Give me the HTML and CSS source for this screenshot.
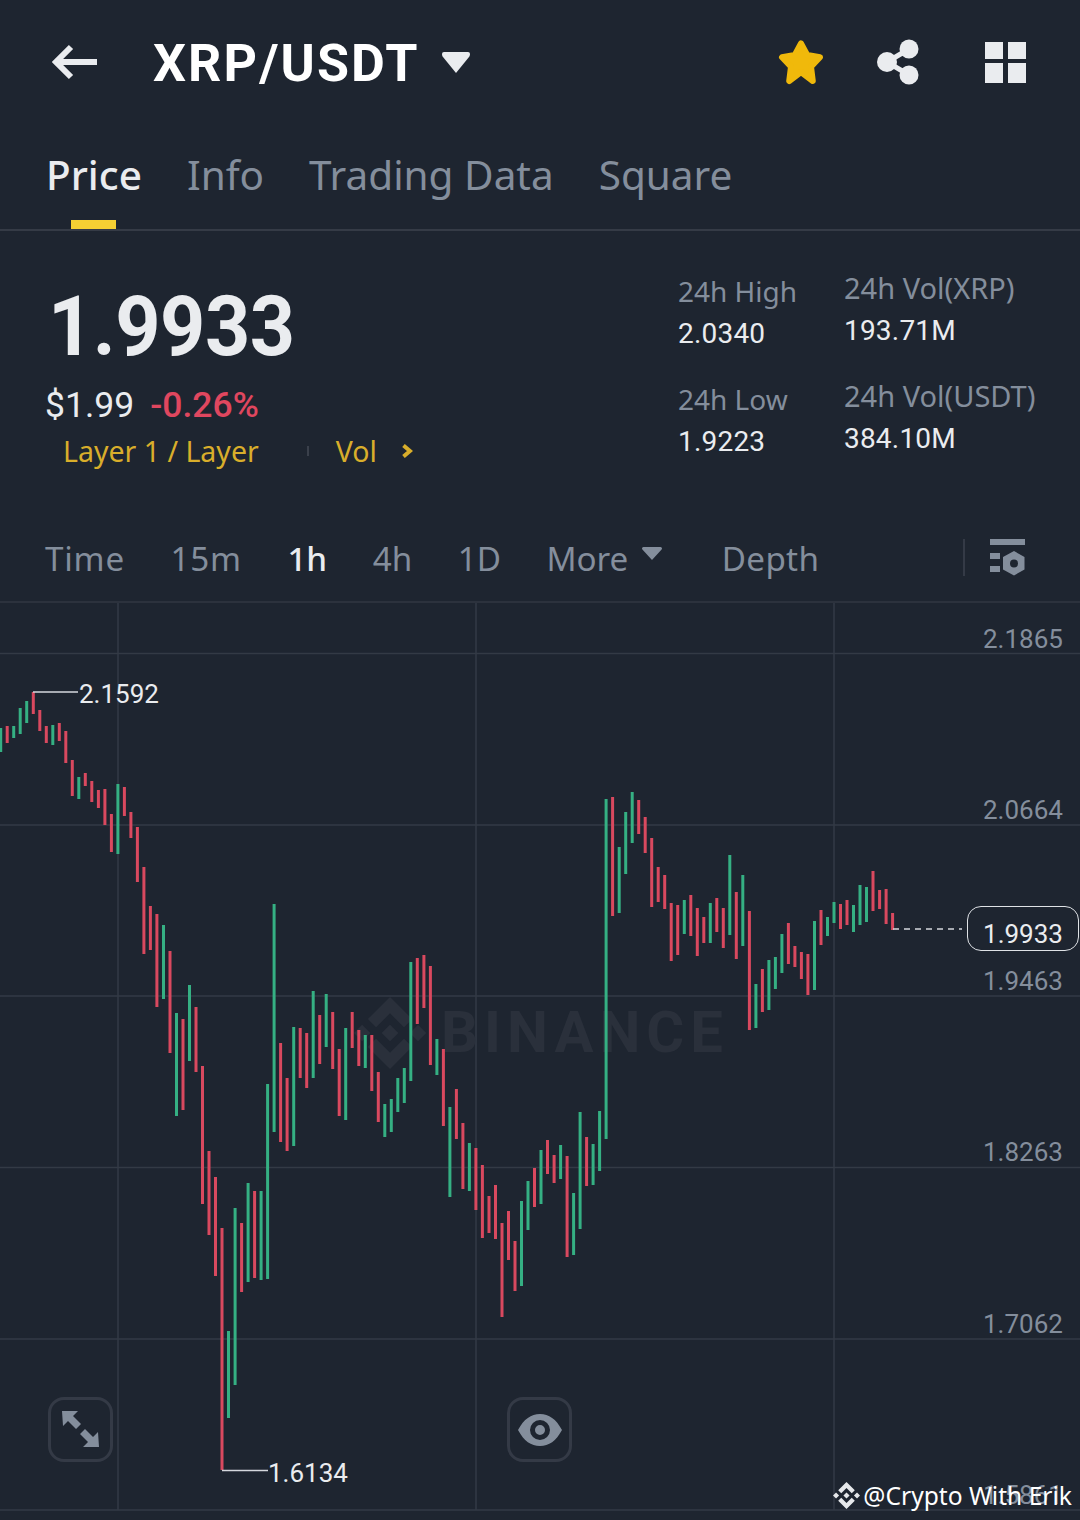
FILE: index.html
```html
<!DOCTYPE html>
<html lang="en">
<head>
<meta charset="utf-8">
<title>XRP/USDT</title>
<link rel="stylesheet" href="styles.css">
</head>
<body>
<div class="page">
  <header class="header">
    <svg class="back" width="46" height="36" viewBox="0 0 46 36"><path d="M45 18H5M19 3L4 18l15 15" /></svg>
    <h1 class="pair">XRP/USDT</h1>
    <svg class="pair-caret" width="28" height="21" viewBox="0 0 28 21"><path d="M2 0h24a2 2 0 0 1 2 2c0 1-.4 2.500-1 3L14 21 1 5C.4 4.500 0 3 0 2a2 2 0 0 1 2-2z"/></svg>
    <div class="header-icons">
      <svg width="46" height="46" viewBox="0 0 46 46"><path class="star" d="M23 4.500L29.200 16 42 18.300 33 27.700 34.800 42 23 33 11.200 42 13 27.700 4 18.300 16.800 16z"/></svg>
      <svg class="share" width="44" height="46" viewBox="0 0 44 46"><path d="M33 10L11 23l22 13"/><circle cx="33" cy="10" r="9.500"/><circle cx="11" cy="23" r="10"/><circle cx="33" cy="36" r="9.500"/></svg>
      <svg class="layout" width="41" height="41" viewBox="0 0 41 41"><rect x="0" y="0" width="18" height="17"/><rect x="23" y="0" width="18" height="17"/><rect x="0" y="21" width="18" height="20"/><rect x="23" y="21" width="18" height="20"/></svg>
    </div>
  </header>

  <nav class="tabs">
    <a class="tab tab-active">Price<span class="tab-mark"></span></a>
    <a class="tab">Info</a>
    <a class="tab">Trading Data</a>
    <a class="tab">Square</a>
  </nav>

  <section class="summary">
    <div class="summary-left">
      <div class="last-price">1.9933</div>
      <div class="fiat-row"><span class="fiat">$1.99</span><span class="change">-0.26%</span></div>
      <div class="tags-row">
        <span>Layer 1 / Layer</span>
        <i class="tags-divider"></i>
        <span>Vol</span>
        <svg class="tags-chevron" width="12" height="14" viewBox="0 0 12 14"><path d="M2.500 1.500L9 7l-6.500 5.500"/></svg>
      </div>
    </div>
    <div class="stats">
      <dl class="stat-col">
        <dt>24h High</dt><dd>2.0340</dd>
        <dt>24h Low</dt><dd>1.9223</dd>
      </dl>
      <dl class="stat-col stat-col-raised">
        <dt>24h Vol(XRP)</dt><dd>193.71M</dd>
        <dt>24h Vol(USDT)</dt><dd>384.10M</dd>
      </dl>
    </div>
  </section>

  <nav class="ranges">
    <span class="range-wide">Time</span>
    <span class="range-wide">15m</span>
    <span class="range-active">1h</span>
    <span>4h</span>
    <span>1D</span>
    <span class="range-more">More<svg width="20" height="13" viewBox="0 0 20 13"><path d="M1.500 0h17a1.500 1.500 0 0 1 1.100 2.500L10 13 .4 2.500A1.500 1.500 0 0 1 1.500 0z"/></svg></span>
    <span class="range-depth">Depth</span>
    <i class="ranges-divider"></i>
    <svg class="ranges-settings" width="36" height="37" viewBox="0 0 36 37"><path d="M0 0h35v6H0zM0 14h10v6H0zM0 27h10v6H0z"/><path fill-rule="evenodd" d="M24 12l10.500 6v12.500L24 36.500l-11-6V18zm0 8.500a4 4 0 1 0 0 8 4 4 0 0 0 0-8z"/></svg>
  </nav>

  <main class="chart">
    <svg class="chart-svg" width="1080" height="917" viewBox="0 603 1080 917">
      <path class="grid" d="M0 653.500H1080M0 825H1080M0 996H1080M0 1167.500H1080M0 1339H1080M0 1510H1080M118 603V1510M476 603V1510M834 603V1510"/>
      <g class="mark">
        <g transform="translate(354 997) scale(.5687)">
          <path d="M38.730 53.200l24.590-24.580 24.600 24.600 14.300-14.300L63.320 0l-38.900 38.900 14.310 14.300zM0 63.310L14.300 49l14.310 14.310-14.310 14.300zM38.730 73.410L63.320 98l24.600-24.600 14.310 14.290-38.900 38.910-38.910-38.880-.02-.02zM98.280 63.310l14.300-14.310 14.310 14.300-14.310 14.310zM77.830 63.300L63.320 48.780 52.590 59.510l-1.240 1.230-2.540 2.540 14.510 14.500 14.510-14.470z"/>
        </g>
        <text class="mark-word" x="441" y="1052">BINANCE</text>
      </g>
      <path class="candles-green" d="M.7 728V752M13.700 726V738M20.200 708V734M26.700 701V723M52.800 725V745M78.800 777V799M117.900 784V854M163.500 925V999M176.500 1013V1116M189.500 985V1061M228.500 1331V1418M235.100 1208V1385M248.100 1183V1282M261.100 1191V1280M267.600 1084V1279M274.100 904V1132M293.700 1027V1146M313.200 991V1078M326.200 994V1047M345.700 1028V1120M365.300 1035V1068M384.800 1104V1137M391.300 1099V1132M397.800 1078V1112M404.300 1068V1103M410.800 962V1081M436.900 1039V1075M449.900 1107V1197M469.400 1143V1191M521.500 1201V1286M528 1181V1230M541 1150V1204M560.600 1145V1179M573.600 1193V1255M580.100 1112V1229M593.100 1144V1185M599.600 1111V1171M606.100 799V1139M619.200 847V913M625.700 812V874M632.200 792V843M684.300 900V934M710.300 903V943M729.800 855V935M742.800 875V946M755.900 984V1028M768.900 960V1010M775.400 957V989M781.900 934V973M814.500 921V990M827.500 917V936M834 902V923M853.500 905V932M860 885V925M866.500 887V922"/>
      <path class="candles-red" d="M7.200 726V743M33.300 692V714M39.800 710V731M46.300 726V743M59.300 723V741M65.800 731V763M72.300 760V796M85.300 773V786M91.800 781V802M98.400 790V808M104.900 789V825M111.400 814V852M124.400 787V816M130.900 812V838M137.400 827V882M143.900 867V954M150.400 906V950M156.900 914V1007M170 951V1053M183 1019V1110M196 1007V1072M202.500 1066V1204M209 1151V1235M215.500 1177V1276M222 1228V1470M241.600 1223V1292M254.600 1191V1278M280.600 1043V1142M287.100 1078V1151M300.200 1028V1078M306.700 1033V1088M319.700 1015V1064M332.700 1012V1069M339.200 1049V1116M352.200 1012V1048M358.800 1030V1066M371.800 1035V1091M378.300 1072V1122M417.300 958V1024M423.900 955V1008M430.400 966V1065M443.400 1049V1126M456.400 1089V1139M462.900 1123V1189M475.900 1148V1210M482.400 1165V1238M489 1196V1233M495.500 1185V1239M502 1223V1317M508.500 1211V1260M515 1241V1291M534.500 1168V1207M547.500 1140V1174M554.100 1155V1183M567.100 1156V1257M586.600 1137V1186M612.600 797V916M638.700 800V834M645.200 817V853M651.700 838V907M658.200 867V902M664.700 875V909M671.200 903V961M677.700 905V955M690.800 895V936M697.300 908V956M703.800 917V943M716.800 898V932M723.300 908V948M736.300 892V959M749.400 911V1030M762.400 969V1012M788.400 923V964M794.900 946V967M801.400 952V979M807.900 954V995M821 910V945M840.500 904V929M847 900V925M873 871V911M879.600 890V909M886.100 889V924M892.600 913V930"/>
      <path class="leader" d="M33 692H78M222 1470.500H268"/>
      <path class="last-line" d="M893 929H962"/>
      <g class="axis">
        <text x="983" y="648">2.1865</text>
        <text x="983" y="819">2.0664</text>
        <text x="983" y="990">1.9463</text>
        <text x="983" y="1161">1.8263</text>
        <text x="983" y="1333">1.7062</text>
        <text x="983" y="1504">1.5861</text>
      </g>
      <text class="extreme" x="79" y="703">2.1592</text>
      <text class="extreme" x="268" y="1482">1.6134</text>
    </svg>

    <div class="price-tag">1.9933</div>

    <button class="chart-btn btn-expand">
      <svg width="38" height="38" viewBox="0 0 38 38"><path d="M0 0h16l-5 5 8 8-5 5-8-8-5 5zM37 36H21l5-5-8-8 5-5 8 8 5-5z"/></svg>
    </button>
    <button class="chart-btn btn-eye">
      <svg width="44" height="32" viewBox="0 0 44 32"><path fill-rule="evenodd" d="M22 0c9 0 16 5 22 16-6 11-13 16-22 16S6 27 0 16C6 5 13 0 22 0zm0 6a10 10 0 1 0 0 20 10 10 0 0 0 0-20zm0 5a5 5 0 1 1 0 10 5 5 0 0 1 0-10z"/></svg>
    </button>

    <div class="credit">
      <svg width="27" height="27" viewBox="0 0 126.610 126.610"><path d="M38.730 53.200l24.590-24.580 24.600 24.600 14.300-14.300L63.320 0l-38.900 38.900 14.310 14.300zM0 63.310L14.300 49l14.310 14.310-14.310 14.300zM38.730 73.410L63.320 98l24.600-24.600 14.310 14.290-38.900 38.910-38.910-38.880-.02-.02zM98.280 63.310l14.300-14.310 14.310 14.300-14.310 14.310zM77.830 63.300L63.320 48.780 52.590 59.510l-1.240 1.230-2.540 2.540 14.510 14.500 14.510-14.470z"/></svg>
      <span>@Crypto With Erik</span>
    </div>
  </main>
</div>
</body>
</html>
```
FILE: styles.css
```css
* { box-sizing: border-box; }
html, body { margin: 0; padding: 0; background: #1e2530; }
body { font-family: "Noto Sans", sans-serif; color: #eaecef; }
.page { width: 1080px; height: 1520px; overflow: hidden; display: flex; flex-direction: column; }

.header { height: 124px; display: flex; align-items: center; padding: 0 54px 0 52px; flex: none; }
.back { fill: none; stroke: #eaecef; stroke-width: 6; margin-right: 55px; }
.pair { margin: 0 22px 0 0; font: 700 52px/1 Roboto, sans-serif; color: #fff; letter-spacing: 2.100px; position: relative; top: 2px; }
.pair-caret { fill: #eaecef; }
.header-icons { margin-left: auto; display: flex; align-items: center; gap: 52px; }
.star { fill: #f0b90b; stroke: #f0b90b; stroke-width: 6; stroke-linejoin: round; }
.share { fill: #eaecef; }
.share path { fill: none; stroke: #eaecef; stroke-width: 5; }
.layout { fill: #eaecef; margin-left: 13px; }

.tabs { height: 107px; flex: none; display: flex; gap: 45px; padding: 0 0 0 46px; border-bottom: 2px solid #353b46; }
.tab { display: flex; flex-direction: column; align-items: center; color: #848e9c; font-size: 40.500px; line-height: 54px; padding-top: 24px; }
.tab-active { color: #eaecef; font-weight: 500; }
.tab-mark { width: 45px; height: 9px; background: #f5d033; margin-top: 18px; }

.summary { height: 291px; flex: none; display: flex; justify-content: space-between; padding: 0 46px 0 46px; }
.summary-left { padding-top: 54px; }
.last-price { font: 700 84px/1 Roboto, sans-serif; margin-left: 2px; letter-spacing: -.5px; color: #eaecef; transform: scaleX(.94); transform-origin: left center; }
.fiat-row { display: flex; gap: 16px; margin: 15px 0 0 -1px; font: 400 35.500px/42px Roboto, sans-serif; }
.change { color: #e0475f; font-weight: 500; }
.tags-row { display: flex; align-items: center; margin: 5px 0 0 17px; color: #d9ae2b; font: 400 28.500px/40px "Noto Sans", sans-serif; }
.tags-divider { width: 2px; height: 10px; background: #3a404b; margin: 0 27px 0 48px; }
.tags-chevron { fill: none; stroke: #d9ae2b; stroke-width: 4; margin-left: 24px; }

.stats { display: grid; grid-template-columns: 166px auto; padding-top: 40px; width: 356px; flex: none; }
.stat-col { margin: 0; }
.stat-col dt { color: #848e9c; font-size: 28px; line-height: 40px; white-space: nowrap; }
.stat-col-raised { margin-top: -3px; }
.stat-col-raised dt { font-size: 29px; }
.stat-col dd { margin: 3px 0 25px; font: 400 28px/40px Roboto, sans-serif; color: #eaecef; letter-spacing: .2px; white-space: nowrap; }

.ranges { height: 81px; flex: none; display: flex; align-items: center; gap: 45.500px; padding: 0 54px 6px 45px; border-bottom: 2px solid #2c323d; color: #848e9c; font-size: 33.200px; }
.range-wide { letter-spacing: .8px; }
.range-active { color: #eaecef; font-weight: 500; }
.range-more { display: flex; align-items: center; gap: 14px; }
.range-more svg { fill: #848e9c; margin-top: -10px; }
.range-depth { margin-left: 14px; letter-spacing: .3px; }
.ranges-divider { width: 2px; height: 37px; background: #343a46; margin-left: auto; margin-right: -20px; margin-top: -2px; }
.ranges-settings { fill: #848e9c; margin-top: -2px; }

.chart { position: relative; flex: 1; }
.chart-svg { display: block; }
.grid { fill: none; stroke: #333a45; stroke-width: 1.500; }
.mark { fill: #2a303b; }
.mark-word { font: 700 58px Roboto, sans-serif; letter-spacing: 6px; }
.candles-green { fill: none; stroke: #35b083; stroke-width: 3; }
.candles-red { fill: none; stroke: #d9495f; stroke-width: 3; }
.leader { fill: none; stroke: #d5d8dd; stroke-width: 1.500; }
.last-line { fill: none; stroke: #d5d8dd; stroke-width: 1.500; stroke-dasharray: 6 5; }
.axis { fill: #848e9c; font: 400 26px Roboto, sans-serif; }
.extreme { fill: #eaecef; font: 400 26px Roboto, sans-serif; }

.price-tag { position: absolute; left: 967px; top: 303px; width: 112px; height: 45px; border: 1.500px solid #dfe2e6; border-radius: 14px; background: #1e2530; color: #eaecef; font: 400 26px/55px Roboto, sans-serif; text-align: center; }
.chart-btn { position: absolute; top: 794px; width: 65px; height: 65px; padding: 0; display: flex; align-items: center; justify-content: center; background: transparent; border: 3px solid #343a46; border-radius: 16px; }
.chart-btn svg { fill: #848e9c; }
.btn-expand { left: 48px; }
.btn-eye { left: 507px; }
.credit { position: absolute; right: 8px; top: 879px; display: flex; align-items: center; gap: 3px; color: #fff; font: 400 24.600px/27px "Noto Sans", sans-serif; }
.credit svg { fill: #e6e8eb; }
```
